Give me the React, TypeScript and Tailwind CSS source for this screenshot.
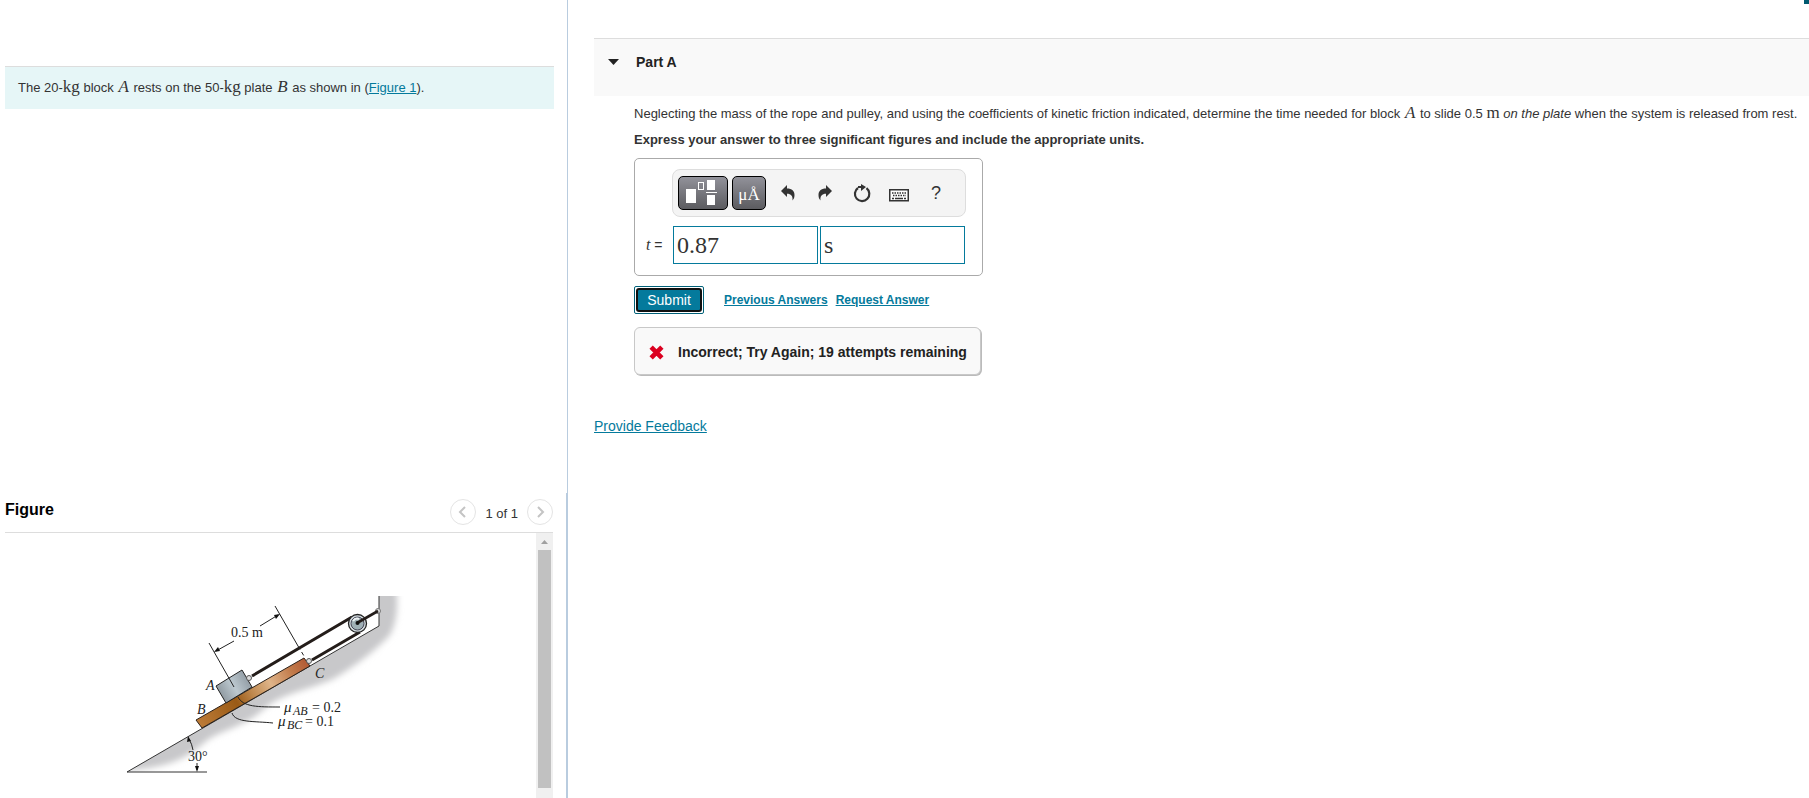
import { useState } from 'react';
import type { ReactNode } from 'react';

const linkClass = 'text-[#047a9c] underline';

// Zero line height keeps the serif runs from stretching the text line
const MathText = ({ italic, children }: { italic?: boolean; children: ReactNode }) => (
  <span
    className={
      italic
        ? "px-px font-['Liberation_Serif',serif] text-[17px] leading-[0px] italic"
        : "font-['Liberation_Serif',serif] text-[17px] leading-[0px]"
    }
  >
    {children}
  </span>
);

const InclineFigure = () => (
  <svg
    width="290"
    height="190"
    viewBox="120 590 290 190"
    role="img"
    aria-label="Block A on plate B on a 30 degree incline"
    className="shrink-0 font-['Liberation_Serif',serif]"
  >
    <defs>
      <linearGradient id="plate" gradientUnits="userSpaceOnUse" x1="199" y1="724" x2="307" y2="662">
        <stop offset="0" stopColor="#bd7c38" />
        <stop offset="0.35" stopColor="#9a5a15" />
        <stop offset="0.5" stopColor="#c08a50" />
        <stop offset="0.66" stopColor="#dfb489" />
        <stop offset="0.85" stopColor="#c27c4c" />
        <stop offset="1" stopColor="#b25a34" />
      </linearGradient>
      <linearGradient id="block" gradientUnits="userSpaceOnUse" x1="221" y1="694" x2="247" y2="679">
        <stop offset="0" stopColor="#929ca3" />
        <stop offset="0.5" stopColor="#bcc8cf" />
        <stop offset="1" stopColor="#95a0a8" />
      </linearGradient>
      <clipPath id="ground">
        <path d="M127 772 L379 626 V596 H410 V772 Z" />
      </clipPath>
      <filter id="soft" x="-10%" y="-10%" width="120%" height="120%">
        <feGaussianBlur stdDeviation="3" />
      </filter>
    </defs>

    {/* Ground */}
    <g clipPath="url(#ground)">
      <path
        d="M120 772 L370 610 V580 H395 Q401 615 390 635 C378 648 358 664 335 678 C310 690 285 692 265 708 C245 727 220 730 205 742 C185 760 170 764 150 768 Z"
        fill="#c8c8ca"
        filter="url(#soft)"
      />
    </g>
    <path d="M207 772 H127 L379 626 V596" fill="none" stroke="#333" />

    {/* Plate and block */}
    <path d="M196 720 L304 658 L310 666 L202 728 Z" fill="url(#plate)" stroke="#2b2018" />
    <path d="M216 686 L242 670 L252 687 L226 703 Z" fill="url(#block)" stroke="#222" />

    {/* Ropes and pulley */}
    <path d="M252 676 L352 617 M312 660 L360 632" stroke="#241d1a" strokeWidth="3" />
    <circle cx="249" cy="678" r="2.5" fill="#ddd" stroke="#555" />
    <circle cx="309" cy="661" r="2.5" fill="#ddd" stroke="#555" />
    <circle cx="378" cy="611" r="2.5" fill="#ddd" stroke="#777" />
    <circle cx="357.5" cy="623.5" r="9" fill="#d5dde0" stroke="#222" strokeWidth="1.3" />
    <circle cx="357.5" cy="623.5" r="6.5" fill="#9fb0b6" stroke="#445" />
    <path d="M353 621 A5 5 0 0 1 359 619" fill="none" stroke="#eef3f4" strokeWidth="2" />
    <path d="M357 623 L378 611" stroke="#241d1a" strokeWidth="2.6" />
    <circle cx="357.5" cy="623" r="2" fill="#111" />

    {/* Dimension lines */}
    <g fill="none" stroke="#222">
      <path d="M209 643 L234 687 M275 606 L298 646" />
      <path d="M298 646 L304 656" strokeDasharray="4 3" />
      <path d="M234 641 L216 651 M260 626 L278 615" />
      <path d="M238 697 C243 707 258 707 280 707" />
      <path d="M232 713 C235 723 255 721 273 723" />
      <path d="M189 739 Q192 744 193 750 M197 763 V770" />
    </g>
    <path d="M214 652 L218 647 L220 651 Z M280 614 L274 615 L276 619 Z" fill="#111" />
    <path d="M188 736 L187 742 L191 741 Z M197 772 L195 766 L199 766 Z" fill="#111" />

    <g fontSize="14" fill="#222">
      <text x="231" y="637">0.5 m</text>
      <text x="188" y="761">30°</text>
      <text x="206" y="690" fontStyle="italic">A</text>
      <text x="197" y="714" fontStyle="italic">B</text>
      <text x="315" y="678" fontStyle="italic">C</text>
      <text x="284" y="712" fontSize="15" fontStyle="italic">μ</text>
      <text x="293" y="715" fontSize="12" fontStyle="italic">AB</text>
      <text x="312" y="712">= 0.2</text>
      <text x="278" y="726" fontSize="15" fontStyle="italic">μ</text>
      <text x="287" y="729" fontSize="12" fontStyle="italic">BC</text>
      <text x="305" y="726">= 0.1</text>
    </g>
  </svg>
);

const TemplatesIcon = () => (
  <svg width="34" height="28" viewBox="0 0 34 28" aria-hidden="true">
    <path d="M0 10H10V24H0Z M21 1H29V11H21Z M21 16H29V26H21Z M20 13H31V14H20Z" fill="#fff" />
    <rect x="12.5" y="3.5" width="5" height="7" fill="none" stroke="#fff" />
  </svg>
);

const UndoIcon = ({ flip }: { flip?: boolean }) => (
  <svg width="14" height="16" viewBox="0 0 14 16" aria-hidden="true">
    <path
      d="M0 6 L6 0 V3.5 C11 3.5 13.5 6 13.5 10 C13.5 12.5 12.8 14 11.5 15.5 C12 11 10 8.8 6 8.8 V12 Z"
      fill="#333"
      transform={flip ? 'translate(14 0) scale(-1 1)' : undefined}
    />
  </svg>
);

const ResetIcon = () => (
  <svg width="18" height="20" viewBox="0 0 18 20" aria-hidden="true">
    <path d="M5 5 A7.2 7.2 0 1 0 13.5 5.2" fill="none" stroke="#333" strokeWidth="2.2" />
    <path d="M8 1 L13 4 L8 8 Z M5 3 H9 V5 H5 Z" fill="#333" />
  </svg>
);

const KeyboardIcon = () => (
  <svg width="20" height="13" viewBox="0 0 20 13" className="mt-1" aria-hidden="true">
    <rect x="0.75" y="0.75" width="18.5" height="11" fill="#fff" stroke="#333" strokeWidth="1.5" />
    <path d="M3 4H17 M4 6.5H17" stroke="#333" strokeWidth="1.5" strokeDasharray="1.5 1" />
    <path d="M3 9.5H5 M6 9.5H14 M15 9.5H17" stroke="#333" strokeWidth="1.5" />
  </svg>
);

const tools = [
  { label: 'Undo', icon: <UndoIcon /> },
  { label: 'Redo', icon: <UndoIcon flip /> },
  { label: 'Reset', icon: <ResetIcon /> },
  { label: 'Keyboard shortcuts', icon: <KeyboardIcon /> },
  { label: 'Help', icon: <span className="text-[18px] leading-none">?</span> },
];

const darkButton =
  'flex h-[34px] items-center justify-center rounded-[5px] border border-black bg-gradient-to-b from-[#92929a] to-[#5c5c60] text-white';

const AnswerBox = () => {
  const [value, setValue] = useState('0.87');
  const [unit, setUnit] = useState('s');
  const field =
    "h-[38px] w-[145px] border border-[#047a9c] bg-white px-[3px] font-['Liberation_Serif',serif] text-[24px] text-[#333] outline-none";

  return (
    <div className="mt-2 w-[349px] rounded-[5px] border border-[#aaa] px-2.5 pt-2.5 pb-[11px]">
      <div className="ml-[27px] flex h-12 w-[294px] items-center gap-1 rounded-lg border border-[#ddd] bg-[#f4f4f4] px-[5px]">
        <button type="button" aria-label="Templates" className={`${darkButton} w-[50px]`}>
          <TemplatesIcon />
        </button>
        <button
          type="button"
          aria-label="Units"
          className={`${darkButton} w-[34px] pt-1 font-['Liberation_Serif',serif] text-[17px]`}
        >
          μÅ
        </button>
        <div className="ml-1 flex gap-[9px]">
          {tools.map((tool) => (
            <button key={tool.label} type="button" aria-label={tool.label} className="flex h-7 w-7 items-center justify-center text-[#333]">
              {tool.icon}
            </button>
          ))}
        </div>
      </div>
      <div className="mt-[9px] flex items-center">
        <label htmlFor="answer" className="w-7 pl-px text-[14px] whitespace-nowrap">
          <i className="font-['Liberation_Serif',serif] text-[16px]">t</i> =
        </label>
        <div className="flex gap-0.5">
          <input id="answer" className={field} value={value} onChange={(e) => setValue(e.target.value)} />
          <input aria-label="Units of t" className={field} value={unit} onChange={(e) => setUnit(e.target.value)} />
        </div>
      </div>
    </div>
  );
};

const Chevron = ({ d }: { d: string }) => (
  <svg width="12" height="14" viewBox="0 0 12 14" aria-hidden="true">
    <path d={d} fill="none" stroke="#c4c4c4" strokeWidth="2" />
  </svg>
);

const pagerButton = 'flex h-[26px] w-[26px] items-center justify-center rounded-full border border-[#e4e4e4]';

const ProblemPane = () => (
  <aside className="flex w-[31.4%] shrink-0 flex-col">
    <div className="flex-1 border-r border-[#b9ccdf] pt-[66px] pr-[13px] pl-[5px]">
      <p className="border-t border-[#ddd] bg-[#e6f6f7] px-[13px] py-3 text-[13px] leading-[18px]">
        The 20-<MathText>kg</MathText> block <MathText italic>A</MathText> rests on the 50-<MathText>kg</MathText> plate{' '}
        <MathText italic>B</MathText> as shown in (
        <a href="#figure" className={linkClass}>
          Figure 1
        </a>
        ).
      </p>
    </div>

    <section id="figure" className="border-r-2 border-[#b9ccdf] pr-[13px] pl-[5px]">
      <div className="flex h-10 items-center justify-between border-b border-[#ddd] pb-0.5">
        <h2 className="pb-1 text-[16px] font-bold text-black">Figure</h2>
        <div className="flex items-center gap-[9px] text-[13px]">
          <button type="button" aria-label="Previous figure" className={pagerButton}>
            <Chevron d="M8 2 L3 7 L8 12" />
          </button>
          <span className="pt-1">1 of 1</span>
          <button type="button" aria-label="Next figure" className={pagerButton}>
            <Chevron d="M4 2 L9 7 L4 12" />
          </button>
        </div>
      </div>
      <div className="flex justify-between">
        <div className="pt-[57px] pb-[18px] pl-[115px]">
          <InclineFigure />
        </div>
        <div className="flex w-[17px] flex-col items-center bg-[#f0f0f0] pb-2.5">
          <svg width="17" height="17" viewBox="0 0 17 17" className="shrink-0" aria-hidden="true">
            <path d="M5 11 L8.5 7 L12 11 Z" fill="#a0a0a0" />
          </svg>
          <div className="w-[13px] flex-1 bg-[#c1c1c1]"></div>
        </div>
      </div>
    </section>
  </aside>
);

const App = () => {
  return (
    <div className="relative flex min-h-screen bg-white font-['Liberation_Sans',Arial,sans-serif] text-[#333]">
      <ProblemPane />

      <main className="min-w-0 flex-1 pt-[38px] pl-[26px]">
        <header className="flex h-[58px] border-t border-[#ddd] bg-[#f9f9f9] pt-[13px] pl-3.5">
          <button type="button" className="flex h-5 items-center gap-4 text-[14px] font-bold text-[#222]">
            <svg width="12" height="6" viewBox="0 0 12 6" aria-hidden="true">
              <path d="M0 0 H11 L5.5 6 Z" fill="#222" />
            </svg>
            Part A
          </button>
        </header>

        <div className="pl-10">
          <p className="mt-2 text-[13px] leading-[20px] whitespace-nowrap">
            Neglecting the mass of the rope and pulley, and using the coefficients of kinetic friction indicated, determine the
            time needed for block <MathText italic>A</MathText> to slide 0.5 <MathText>m</MathText> <em>on the plate</em> when
            the system is released from rest.
          </p>
          <p className="mt-1.5 text-[13px] leading-[20px] font-bold">
            Express your answer to three significant figures and include the appropriate units.
          </p>

          <AnswerBox />

          <div className="mt-2.5 flex items-center text-[12px] font-bold">
            <button
              type="button"
              className="h-7 w-[70px] rounded-[2px] border border-[#006078] bg-white p-px text-[14px] font-normal text-white"
            >
              <span className="flex h-full items-center justify-center rounded-[3px] border-2 border-[#111] bg-[#047a9c]">
                Submit
              </span>
            </button>
            <a href="#previous" className={`${linkClass} ml-5`}>
              Previous Answers
            </a>
            <a href="#request" className={`${linkClass} ml-2`}>
              Request Answer
            </a>
          </div>

          <div className="mt-[13px] flex h-12 w-[347px] items-center gap-3.5 rounded-md border border-[#c8c8c8] bg-[#f9f9f9] pt-0.5 pl-3.5 text-[14px] font-bold text-[#222] shadow-[1px_1px_0_#bbb]">
            <svg width="15" height="15" viewBox="0 0 14 14" className="shrink-0" aria-hidden="true">
              <path d="M2 2 L12 12 M12 2 L2 12" stroke="#db0020" strokeWidth="4.4" />
            </svg>
            <span className="whitespace-nowrap">Incorrect; Try Again; 19 attempts remaining</span>
          </div>
        </div>

        <a href="#feedback" className={`${linkClass} mt-[41px] inline-block text-[14px]`}>
          Provide Feedback
        </a>
      </main>

      {/* Edge of the page's side tab */}
      <div className="absolute top-0 right-0 h-1 w-[5px] bg-[#005a70]"></div>
    </div>
  );
};

export default App;
